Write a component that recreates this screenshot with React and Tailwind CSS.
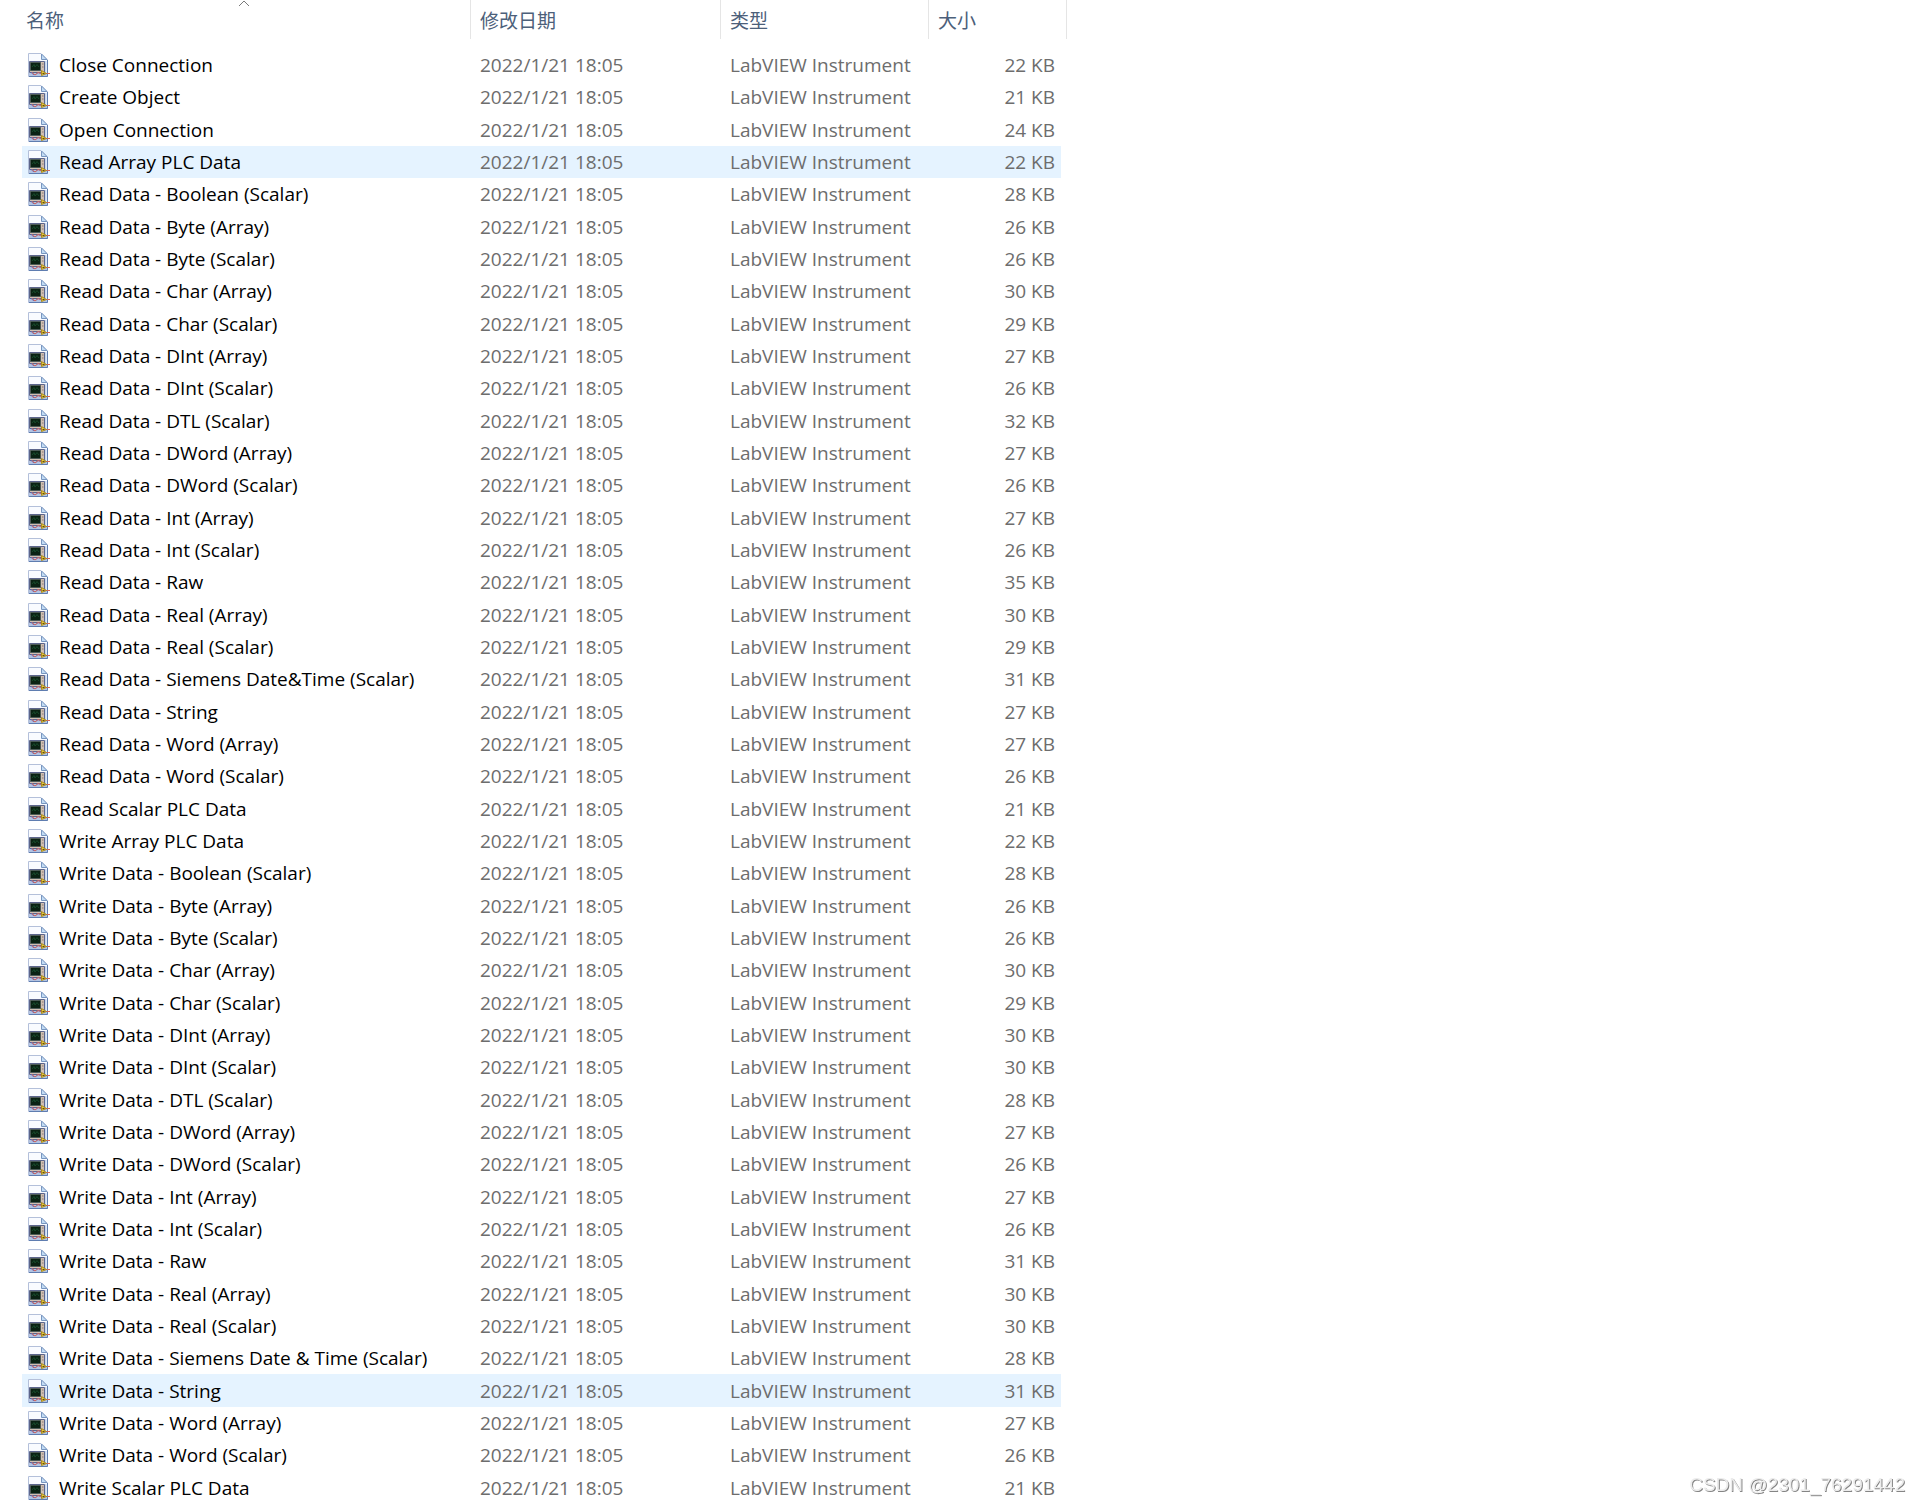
import clsx from "clsx"

const files = [
  ["Close Connection", 22],
  ["Create Object", 21],
  ["Open Connection", 24],
  ["Read Array PLC Data", 22],
  ["Read Data - Boolean (Scalar)", 28],
  ["Read Data - Byte (Array)", 26],
  ["Read Data - Byte (Scalar)", 26],
  ["Read Data - Char (Array)", 30],
  ["Read Data - Char (Scalar)", 29],
  ["Read Data - DInt (Array)", 27],
  ["Read Data - DInt (Scalar)", 26],
  ["Read Data - DTL (Scalar)", 32],
  ["Read Data - DWord (Array)", 27],
  ["Read Data - DWord (Scalar)", 26],
  ["Read Data - Int (Array)", 27],
  ["Read Data - Int (Scalar)", 26],
  ["Read Data - Raw", 35],
  ["Read Data - Real (Array)", 30],
  ["Read Data - Real (Scalar)", 29],
  ["Read Data - Siemens Date&Time (Scalar)", 31],
  ["Read Data - String", 27],
  ["Read Data - Word (Array)", 27],
  ["Read Data - Word (Scalar)", 26],
  ["Read Scalar PLC Data", 21],
  ["Write Array PLC Data", 22],
  ["Write Data - Boolean (Scalar)", 28],
  ["Write Data - Byte (Array)", 26],
  ["Write Data - Byte (Scalar)", 26],
  ["Write Data - Char (Array)", 30],
  ["Write Data - Char (Scalar)", 29],
  ["Write Data - DInt (Array)", 30],
  ["Write Data - DInt (Scalar)", 30],
  ["Write Data - DTL (Scalar)", 28],
  ["Write Data - DWord (Array)", 27],
  ["Write Data - DWord (Scalar)", 26],
  ["Write Data - Int (Array)", 27],
  ["Write Data - Int (Scalar)", 26],
  ["Write Data - Raw", 31],
  ["Write Data - Real (Array)", 30],
  ["Write Data - Real (Scalar)", 30],
  ["Write Data - Siemens Date & Time (Scalar)", 28],
  ["Write Data - String", 31],
  ["Write Data - Word (Array)", 27],
  ["Write Data - Word (Scalar)", 26],
  ["Write Scalar PLC Data", 21],
]

const highlighted = ["Read Array PLC Data", "Write Data - String"]

function ViIcon() {
  return (
    <svg className="h-6 w-6 shrink-0" viewBox="0 0 24 24" aria-hidden="true">
      {/* page with folded corner */}
      <path d="M1.5 .5H14L20.5 7V23.5H1.5Z" fill="#f9fbff" stroke="#b4c0da" />
      <path d="M18.5 8V21" stroke="#c3d6f0" strokeWidth="2" />
      <path d="M20.5 7V23.5H2" fill="none" stroke="#5f7db0" />
      <path d="M2 21.5H20" stroke="#b3c4e2" strokeWidth="3" />
      <path d="M14.5 1V6.5H20Z" fill="#c3dcf4" stroke="#7896c0" />
      {/* front panel */}
      <path d="M2.5 8.5H17.5V19.5H2.5Z" fill="#d0bfb2" stroke="#5d668c" />
      <path d="M3.5 9.5H13.500V17.5H3.5Z" fill="#0b2213" stroke="#4d5b58" />
      <path d="M5 14L7 11.5L8 14L10 11.5L12 14" fill="none" stroke="#17492a" />
      <path d="M15 11H16.500M15 14H16.500" stroke="#8a7d76" />
      {/* wire and terminal */}
      <path d="M4 19L6 21.5L9 21.5L11 19.5L14 20.5" fill="none" stroke="#6a6ab4" />
      <path d="M5 19.5L8 22L11 19.5L14 20.5M18 20.5H23" fill="none" stroke="#d4685c" />
      <path d="M14.5 17.5L19.5 20.5L14.5 22.5Z" fill="#ecca3c" stroke="#a98a22" />
      <path d="M15.5 20.5H17.5" stroke="#5a4a18" />
    </svg>
  )
}

function HeaderButton({ label, sorted }) {
  return (
    <button
      type="button"
      className={clsx(
        "relative flex h-[39px] w-full items-center border-r border-[#e5e5e5] pt-0.5 text-[#4c607a]",
        sorted ? "pl-1" : "pl-[9px]"
      )}
    >
      {label}
      {sorted && (
        <svg className="absolute left-1/2 top-0 h-2 w-4 -translate-x-1/2" viewBox="0 0 16 8" aria-hidden="true">
          <path d="M1 6L6 1L11 6" fill="none" stroke="#7a7a7a" />
        </svg>
      )}
    </button>
  )
}

function FileRow({ name, size }) {
  return (
    <tr className={clsx("h-8 nth-[3n]:h-[33px]", highlighted.includes(name) && "*:not-last:bg-[#e5f3ff]")}>
      <td className="p-0">
        <div className="flex items-center gap-2 pl-[5px] text-black">
          <ViIcon />
          {name}
        </div>
      </td>
      <td className="p-0 pl-[9px]">2022/1/21 18:05</td>
      <td className="p-0 pl-[9px]">LabVIEW Instrument</td>
      <td className="p-0 pr-[6px] text-right">{size} KB</td>
      <td className="p-0"></td>
    </tr>
  )
}

export default function App() {
  return (
    <main className="min-h-screen bg-white pl-[22px] font-['Open_Sans','Noto_Sans_CJK_SC',sans-serif] text-[19px] leading-6 text-[#6d6d6d]">
      <table className="w-[1045px] table-fixed border-collapse whitespace-nowrap">
        <colgroup>
          <col className="w-[449px]" />
          <col className="w-[250px]" />
          <col className="w-[208px]" />
          <col className="w-[132px]" />
          <col />
        </colgroup>
        <thead>
          <tr className="h-[49px] align-top">
            <th className="p-0 font-normal" scope="col">
              <HeaderButton label="名称" sorted />
            </th>
            <th className="p-0 font-normal" scope="col">
              <HeaderButton label="修改日期" />
            </th>
            <th className="p-0 font-normal" scope="col">
              <HeaderButton label="类型" />
            </th>
            <th className="p-0 font-normal" scope="col" colSpan={2}>
              <HeaderButton label="大小" />
            </th>
          </tr>
        </thead>
        <tbody>
          {files.map(([name, size]) => (
            <FileRow key={name} name={name} size={size} />
          ))}
        </tbody>
      </table>

      <p className="fixed bottom-[7px] right-[15px] font-['Liberation_Sans',sans-serif] text-[19px] text-[#ececec] text-shadow-[1px_1px_0_#858585]">
        CSDN @2301_76291442
      </p>
    </main>
  )
}
